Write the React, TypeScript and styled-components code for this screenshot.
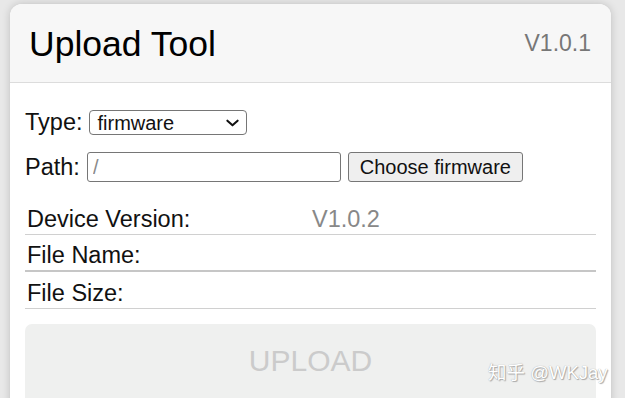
import React from "react";
import styled, { createGlobalStyle } from "styled-components";

const GlobalStyle = createGlobalStyle`
  html, body {
    margin: 0;
    padding: 0;
    height: 100%;
    overflow: hidden;
    background: #e8e8e8;
    font-family: "Liberation Sans", Arial, sans-serif;
  }
`;

const infoRows = [
  { label: "Device Version:", value: "V1.0.2", strong: false },
  { label: "File Name:", value: "", strong: true },
  { label: "File Size:", value: "", strong: false },
];

export default function App() {
  return (
    <>
      <GlobalStyle />
      <Page>
        <Card>
          <Header>
            <Title>Upload Tool</Title>
            <Version>V1.0.1</Version>
          </Header>

          <Body>
            <FieldRow>
              <Label>Type:</Label>
              <SelectWrap>
                <Select defaultValue="firmware">
                  <option value="firmware">firmware</option>
                  <option value="filesystem">filesystem</option>
                </Select>
                <Chevron viewBox="0 0 14 8" aria-hidden>
                  <path d="M1.5 1.5 L7 6.5 L12.5 1.5" />
                </Chevron>
              </SelectWrap>
            </FieldRow>

            <FieldRow $top={16}>
              <Label>Path:</Label>
              <PathInput placeholder="/" />
              <ChooseButton>Choose firmware</ChooseButton>
            </FieldRow>

            <InfoList>
              {infoRows.map((row) => (
                <InfoRow key={row.label} $strong={row.strong}>
                  <InfoLabel>{row.label}</InfoLabel>
                  <InfoValue>{row.value}</InfoValue>
                </InfoRow>
              ))}
            </InfoList>

            <UploadButton disabled>UPLOAD</UploadButton>
          </Body>
        </Card>
        <Watermark>知乎 @WKJay</Watermark>
      </Page>
    </>
  );
}

const Page = styled.div`
  position: relative;
  height: 398px;
  padding: 4px 14px 0 10px;
  box-sizing: border-box;
  overflow: hidden;
`;

const Card = styled.div`
  background: #fff;
  border-radius: 12px 12px 0 0;
  box-shadow: 0 0 8px rgba(0, 0, 0, 0.18);
  height: 420px;
  overflow: hidden;
`;

const Header = styled.div`
  height: 78px;
  background: #f7f7f7;
  border-bottom: 1px solid #dcdcdc;
  display: flex;
  align-items: center;
  justify-content: space-between;
  padding: 0 20px 0 19px;
`;

const Title = styled.div`
  font-size: 35.5px;
  color: #000;
  margin-top: 2px;
`;

const Version = styled.div`
  font-size: 23px;
  color: #777;
`;

const Body = styled.div`
  padding: 26px 15px 0 15px;
`;

const FieldRow = styled.div<{ $top?: number }>`
  display: flex;
  align-items: center;
  margin-top: ${(p) => p.$top ?? 0}px;
`;

const Label = styled.span`
  font-size: 23.5px;
  color: #111;
  margin-right: 7px;
`;

const SelectWrap = styled.div`
  position: relative;
  display: flex;
`;

const Select = styled.select`
  appearance: none;
  width: 158px;
  height: 25px;
  box-sizing: border-box;
  font-family: "Liberation Sans", Arial, sans-serif;
  font-size: 20px;
  color: #111;
  border: 1px solid #767676;
  border-radius: 4px;
  background: #fff;
  padding: 0 0 0 7px;
`;

const Chevron = styled.svg`
  position: absolute;
  right: 8px;
  top: 9px;
  width: 13px;
  height: 8px;
  fill: none;
  stroke: #111;
  stroke-width: 2.2;
  stroke-linecap: round;
  stroke-linejoin: round;
  pointer-events: none;
`;

const PathInput = styled.input`
  width: 254px;
  height: 30px;
  box-sizing: border-box;
  font-family: "Liberation Sans", Arial, sans-serif;
  font-size: 20px;
  border: 1px solid #767676;
  border-radius: 3px;
  padding: 0 5px;
  &::placeholder {
    color: #8a8a8a;
  }
`;

const ChooseButton = styled.button`
  height: 30px;
  width: 175px;
  margin-left: 7px;
  font-family: "Liberation Sans", Arial, sans-serif;
  font-size: 20px;
  color: #111;
  background: #efefef;
  border: 1px solid #767676;
  border-radius: 3px;
  padding: 0;
`;

const InfoList = styled.div`
  margin-top: 16px;
`;

const InfoRow = styled.div<{ $strong: boolean }>`
  display: grid;
  grid-template-columns: 285px 1fr;
  align-items: center;
  height: 37px;
  box-sizing: border-box;
  padding: 6px 0 0 2px;
  border-bottom: ${(p) => (p.$strong ? "2px solid #c6c6c6" : "1px solid #d0d0d0")};
`;

const InfoLabel = styled.span`
  font-size: 23.5px;
  color: #111;
`;

const InfoValue = styled.span`
  font-size: 23.5px;
  color: #888;
`;

const UploadButton = styled.button`
  display: block;
  width: 100%;
  height: 90px;
  margin-top: 15px;
  background: #eff0ef;
  border: none;
  border-radius: 7px;
  font-family: "Liberation Sans", Arial, sans-serif;
  font-size: 30px;
  color: #cbcbcb;
  padding: 0 0 16px;
`;

const Watermark = styled.div`
  position: absolute;
  left: 488px;
  top: 358px;
  font-family: "Liberation Sans", "Noto Sans CJK SC", sans-serif;
  font-size: 18.5px;
  color: #fff;
  text-shadow: 0 0 1px #999, 1px 1px 1px #aaa;
  white-space: nowrap;
`;
